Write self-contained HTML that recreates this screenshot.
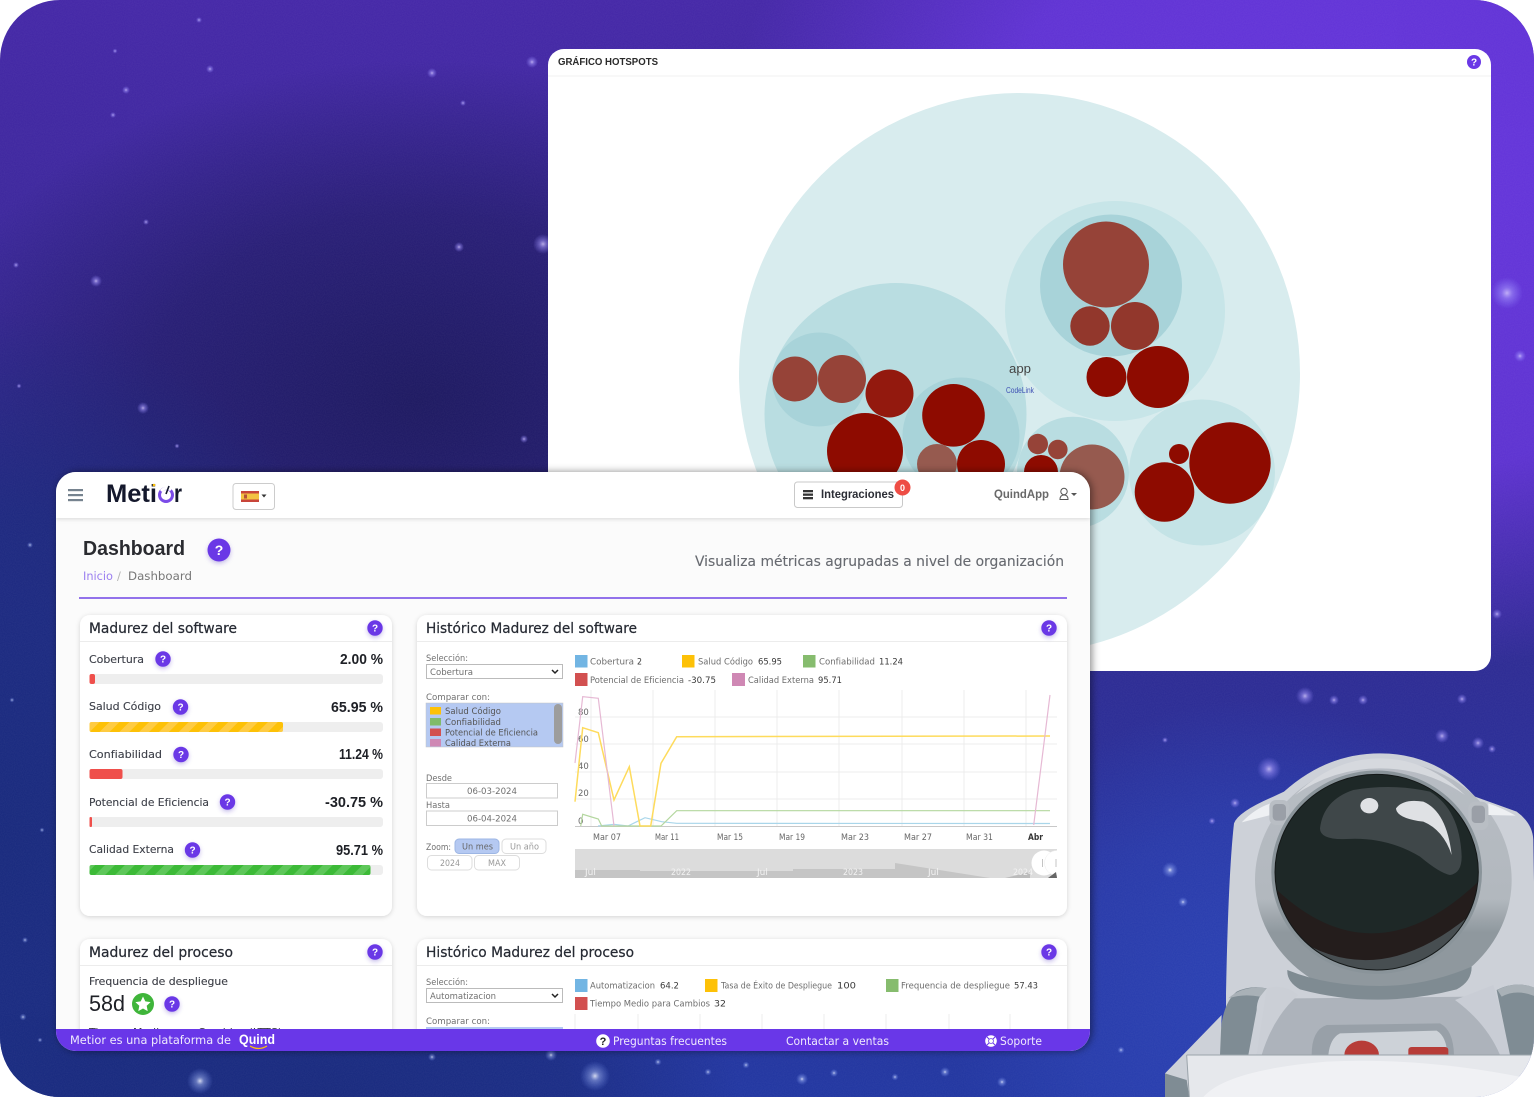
<!DOCTYPE html>
<html lang="es"><head><meta charset="utf-8"><title>Metior Dashboard</title>
<style>
html,body{margin:0;padding:0;background:#fff;width:1536px;height:1097px;overflow:hidden}
svg{display:block}
text{font-family:"DejaVu Sans","Liberation Sans",sans-serif;white-space:pre}
.t{font-size:14px;fill:#262a33;stroke:#262a33;stroke-width:.22}
.l{font-size:10.5px;fill:#3c3f48;stroke:#3c3f48;stroke-width:.12}
.v{font-family:"Liberation Sans",sans-serif;font-size:14.5px;fill:#1e2026;font-weight:700}
.b{font-family:"Liberation Sans",sans-serif;font-weight:700}
.s{font-size:8.5px;fill:#707070}
.g{font-size:8.5px;fill:#6d6d6d}
.n{font-size:8.5px;fill:#3a3a3a}
.x{font-size:8.5px;fill:#666}
.q{font-family:"Liberation Sans",sans-serif;font-size:10px;fill:#fff;font-weight:700;text-anchor:middle}
.f{font-size:11.5px;fill:#efeafd}
.w{font-size:9px;fill:#f2f2f2}
</style></head><body>
<svg xmlns="http://www.w3.org/2000/svg" width="1536" height="1097" viewBox="0 0 1536 1097">
<defs>
<linearGradient id="base" x1="0" y1="0" x2="0" y2="1"><stop offset="0" stop-color="#4629a8"/><stop offset=".45" stop-color="#33288f"/><stop offset="1" stop-color="#2338a2"/></linearGradient>
<radialGradient id="rd" gradientUnits="userSpaceOnUse" cx="0" cy="0" r="1" gradientTransform="translate(420 400) scale(500 340)"><stop offset="0" stop-color="#1e1a60" stop-opacity=".95"/><stop offset=".55" stop-color="#1e1a60" stop-opacity=".6"/><stop offset="1" stop-color="#1e1a60" stop-opacity="0"/></radialGradient>
<radialGradient id="rp" gradientUnits="userSpaceOnUse" cx="0" cy="0" r="1" gradientTransform="translate(1400 170) scale(680 500)"><stop offset="0" stop-color="#6636dc"/><stop offset=".6" stop-color="#6636dc" stop-opacity=".85"/><stop offset="1" stop-color="#6636dc" stop-opacity="0"/></radialGradient>
<radialGradient id="rn" gradientUnits="userSpaceOnUse" cx="0" cy="0" r="1" gradientTransform="translate(0 830) scale(400 520)"><stop offset="0" stop-color="#1a2b7e"/><stop offset=".6" stop-color="#1a2b7e" stop-opacity=".75"/><stop offset="1" stop-color="#1a2b7e" stop-opacity="0"/></radialGradient>
<radialGradient id="rn2" gradientUnits="userSpaceOnUse" cx="0" cy="0" r="1" gradientTransform="translate(320 1097) scale(420 190)"><stop offset="0" stop-color="#1a2b7e"/><stop offset=".6" stop-color="#1a2b7e" stop-opacity=".75"/><stop offset="1" stop-color="#1a2b7e" stop-opacity="0"/></radialGradient>
<radialGradient id="rb" gradientUnits="userSpaceOnUse" cx="0" cy="0" r="1" gradientTransform="translate(1250 1000) scale(300 300)"><stop offset="0" stop-color="#2c42b4"/><stop offset=".6" stop-color="#2c42b4" stop-opacity=".6"/><stop offset="1" stop-color="#2c42b4" stop-opacity="0"/></radialGradient>
<radialGradient id="st"><stop offset="0" stop-color="#d8ccff" stop-opacity=".8"/><stop offset=".35" stop-color="#a99bff" stop-opacity=".5"/><stop offset="1" stop-color="#8f85ff" stop-opacity="0"/></radialGradient>
<radialGradient id="sb"><stop offset="0" stop-color="#f4f6ff" stop-opacity=".85"/><stop offset=".3" stop-color="#b6c8ff" stop-opacity=".45"/><stop offset="1" stop-color="#7f9cff" stop-opacity="0"/></radialGradient>
<linearGradient id="hel" x1="0" y1="0" x2="0" y2="1"><stop offset="0" stop-color="#b8bdc4"/><stop offset=".58" stop-color="#b2b8be"/><stop offset=".72" stop-color="#8f989e"/><stop offset="1" stop-color="#8f989e"/></linearGradient>
<filter id="noise" x="0" y="0" width="100%" height="100%"><feTurbulence type="fractalNoise" baseFrequency=".9" numOctaves="2" seed="3"/><feColorMatrix values="0 0 0 0 1  0 0 0 0 1  0 0 0 0 1  0 0 0 .5 -.12"/></filter>
<filter id="main" x="-5%" y="-5%" width="110%" height="110%"><feDropShadow dx="2" dy="0" stdDeviation="4" flood-color="#000" flood-opacity=".45"/></filter>
<filter id="card" x="-5%" y="-5%" width="110%" height="110%"><feDropShadow dx="0" dy="1" stdDeviation="2.5" flood-color="#000" flood-opacity=".16"/></filter>
<filter id="hs" x="-50%" y="-50%" width="200%" height="200%"><feDropShadow dx="0" dy="2" stdDeviation="2" flood-color="#4b2bbd" flood-opacity=".3"/></filter>
<filter id="hdr" x="-5%" y="-20%" width="110%" height="150%"><feDropShadow dx="0" dy="1" stdDeviation="2" flood-color="#000" flood-opacity=".14"/></filter>
<pattern id="py" width="14" height="14" patternUnits="userSpaceOnUse" patternTransform="rotate(45)"><rect width="14" height="14" fill="#fdc107"/><rect width="7" height="14" fill="#fecb42"/></pattern>
<pattern id="pg" width="14" height="14" patternUnits="userSpaceOnUse" patternTransform="rotate(45)"><rect width="14" height="14" fill="#3cba37"/><rect width="7" height="14" fill="#5ec75a"/></pattern>
<clipPath id="cb"><rect x="0" y="0" width="1534" height="1097" rx="60"/></clipPath>
<clipPath id="cm"><rect x="56" y="472" width="1034" height="579" rx="20"/></clipPath>
<clipPath id="cnav"><rect x="575" y="849" width="482" height="29"/></clipPath>
<clipPath id="clist"><rect x="426" y="703" width="137" height="44"/></clipPath>
<clipPath id="cvis"><ellipse cx="650" cy="396.5" rx="305" ry="293.5"/></clipPath>
<clipPath id="cast"><path d="M0 0H1128V945H0Z"/></clipPath>
</defs>

<!-- background -->
<g clip-path="url(#cb)">
<rect width="1534" height="1097" fill="url(#base)"/>
<rect width="1534" height="1097" fill="url(#rd)"/>
<rect width="1534" height="1097" fill="url(#rp)"/>
<rect width="1534" height="1097" fill="url(#rn)"/>
<rect width="1534" height="1097" fill="url(#rn2)"/>
<rect width="1534" height="1097" fill="url(#rb)"/>
<rect width="1534" height="1097" filter="url(#noise)" opacity=".12"/>
<g fill="url(#st)">
<circle cx="199" cy="20" r="3"/><circle cx="210" cy="69" r="4"/><circle cx="126" cy="90" r="4"/><circle cx="113" cy="115" r="3"/><circle cx="115" cy="51" r="2.500"/><circle cx="432" cy="73" r="5"/><circle cx="463" cy="103" r="3"/><circle cx="532" cy="62" r="6"/><circle cx="96" cy="281" r="6"/><circle cx="146" cy="222" r="3"/><circle cx="16" cy="265" r="3"/><circle cx="143" cy="408" r="6"/><circle cx="459" cy="247" r="5"/><circle cx="543" cy="244" r="10"/><circle cx="524" cy="439" r="4"/><circle cx="177" cy="446" r="2.500"/><circle cx="19" cy="386" r="2.500"/>
<circle cx="1507" cy="293" r="16"/><circle cx="1520" cy="356" r="6"/><circle cx="1497" cy="614" r="5"/><circle cx="1305" cy="696" r="9"/><circle cx="1334" cy="700" r="5"/><circle cx="1363" cy="700" r="5"/><circle cx="1462" cy="699" r="5"/><circle cx="1442" cy="736" r="7"/><circle cx="1478" cy="743" r="6"/><circle cx="1492" cy="749" r="4"/><circle cx="1165" cy="740" r="3"/><circle cx="1269" cy="769" r="12"/><circle cx="1235" cy="803" r="5"/><circle cx="1212" cy="821" r="3.500"/>
</g>
<g fill="url(#sb)">
<circle cx="200" cy="1081" r="13"/><circle cx="595" cy="1076" r="15"/><circle cx="551" cy="1055" r="6"/><circle cx="658" cy="1062" r="3.500"/><circle cx="746" cy="1065" r="3.500"/><circle cx="834" cy="1073" r="4"/><circle cx="802" cy="1079" r="6"/><circle cx="945" cy="1072" r="5"/><circle cx="1002" cy="1082" r="5"/><circle cx="895" cy="1077" r="3.500"/><circle cx="708" cy="1072" r="3.500"/><circle cx="432" cy="1057" r="4"/><circle cx="23" cy="1017" r="3.500"/><circle cx="1121" cy="1050" r="3.500"/><circle cx="1170" cy="870" r="8"/><circle cx="1183" cy="902" r="5"/>
<circle cx="30" cy="545" r="3"/><circle cx="12" cy="700" r="2.500"/><circle cx="42" cy="830" r="2.500"/><circle cx="25" cy="940" r="3"/><circle cx="40" cy="1040" r="2.500"/>
</g>
</g>

<!-- hotspots panel -->
<rect x="548" y="49" width="943" height="622" rx="16" fill="#fff"/>
<line x1="548" x2="1491" y1="76" y2="76" stroke="#f1f1f1"/>
<text class="b" x="558" y="65" textLength="100" lengthAdjust="spacingAndGlyphs" style="font-size:10.500px;fill:#2a2a2a">GRÁFICO HOTSPOTS</text>
<circle cx="1474" cy="62" r="7" fill="#6a38e6"/><text x="1474" y="65.500" class="q">?</text>
<circle cx="1019.500" cy="373.500" r="280.500" fill="#d8ecee"/>
<circle cx="1115" cy="311" r="110" fill="#c7e5e8"/>
<circle cx="1111" cy="285.500" r="71" fill="#a8d3d9"/>
<circle cx="1106" cy="264.500" r="43" fill="#964338"/>
<circle cx="1090" cy="326" r="19.700" fill="#92372c"/>
<circle cx="1135" cy="326" r="24" fill="#92372c"/>
<circle cx="1106.500" cy="377" r="20" fill="#8e0b00"/>
<circle cx="1158" cy="377" r="31" fill="#8e0b00"/>
<circle cx="895.500" cy="414" r="131" fill="#b9dde1"/>
<circle cx="819" cy="379.500" r="47" fill="#a8d3d9"/>
<circle cx="795" cy="379" r="22.500" fill="#964338"/>
<circle cx="842" cy="379" r="24" fill="#964338"/>
<circle cx="889.500" cy="393.500" r="24" fill="#93190e"/>
<circle cx="961" cy="436" r="58.500" fill="#a8d3d9"/>
<circle cx="865" cy="451" r="38" fill="#8e0b00"/>
<circle cx="953.500" cy="415.300" r="31.300" fill="#8e0b00"/>
<circle cx="937" cy="464" r="20" fill="#965a4f"/>
<circle cx="981" cy="464" r="24" fill="#8e0b00"/>
<circle cx="1073" cy="472.700" r="56" fill="#b9dde1"/>
<circle cx="1037.800" cy="444" r="10.200" fill="#964338"/>
<circle cx="1057.800" cy="449.500" r="9.800" fill="#964338"/>
<circle cx="1041" cy="472" r="17" fill="#8e0b00"/>
<circle cx="1092" cy="477" r="32.500" fill="#965a4f"/>
<circle cx="1202" cy="472.500" r="73" fill="#c4e3e6"/>
<circle cx="1230" cy="463" r="40.700" fill="#8e0b00"/>
<circle cx="1164.500" cy="492" r="29.800" fill="#8e0b00"/>
<circle cx="1179" cy="454" r="10" fill="#8e0b00"/>
<text x="1009" y="373" textLength="22" lengthAdjust="spacingAndGlyphs" style="font-family:'Liberation Sans',sans-serif;font-size:13px;fill:#444">app</text>
<text x="1006" y="393" textLength="28" lengthAdjust="spacingAndGlyphs" style="font-family:'Liberation Sans',sans-serif;font-size:8px;fill:#3f51b5">CodeLink</text>

<!-- main panel -->
<rect x="56" y="472" width="1034" height="579" rx="20" fill="#fbfbfb" filter="url(#main)"/>
<g clip-path="url(#cm)">
<rect x="56" y="472" width="1034" height="46" fill="#fff" filter="url(#hdr)"/>
<!-- header -->
<g fill="#76838f"><rect x="68" y="489" width="15" height="2.200"/><rect x="68" y="494" width="15" height="2.200"/><rect x="68" y="499" width="15" height="2.200"/></g>
<text class="b" x="106" y="502" textLength="51" lengthAdjust="spacingAndGlyphs" style="font-size:25px;fill:#14182c">Meti</text>
<circle cx="166" cy="495" r="6.500" fill="none" stroke="#7b4be8" stroke-width="3"/>
<path d="M161 491Q166 486 171 490" fill="none" stroke="#fff" stroke-width="3"/>
<path d="M166 494L169 486" stroke="#14182c" stroke-width="1.600"/><circle cx="154" cy="485" r="1.300" fill="#fdc107"/>
<text class="b" x="174" y="502" textLength="8" lengthAdjust="spacingAndGlyphs" style="font-size:25px;fill:#14182c">r</text>
<rect x="233" y="483.500" width="41.500" height="26" rx="3" fill="#fff" stroke="#ccc"/>
<rect x="241" y="491" width="18" height="11" fill="#c8453a"/><rect x="241" y="493.500" width="18" height="6" fill="#f3c343"/><rect x="244" y="494.500" width="3" height="4" fill="#b5533a"/>
<path d="M261.500 494.500h5l-2.500 3z" fill="#333"/>

<rect x="794.500" y="482" width="108" height="25.500" rx="3" fill="#fff" stroke="#c9c9c9"/>
<g fill="#333"><rect x="803" y="490" width="10" height="2.300"/><rect x="803" y="493.500" width="10" height="2.300"/><rect x="803" y="497" width="10" height="2.300"/></g>
<text class="b" x="821" y="498" textLength="73" lengthAdjust="spacingAndGlyphs" style="font-size:11.500px;fill:#2b2d35">Integraciones</text>
<circle cx="902.500" cy="487.500" r="8" fill="#ee4d45"/><text x="902.500" y="491" class="q" style="font-size:9px">0</text>
<text class="b" x="994" y="498" textLength="55" lengthAdjust="spacingAndGlyphs" style="font-size:12px;fill:#696969">QuindApp</text>
<circle cx="1064" cy="491.500" r="3.200" fill="none" stroke="#555"/><path d="M1060 499.500q0-4.500 4-4.500t4 4.500z" fill="none" stroke="#555"/>
<path d="M1071 493h6l-3 3z" fill="#555"/>

<!-- title -->
<text class="b" x="83" y="555" textLength="102" lengthAdjust="spacingAndGlyphs" style="font-size:20px;fill:#2a2b30">Dashboard</text>
<g filter="url(#hs)"><circle cx="219" cy="550" r="11.500" fill="#6a38e6"/></g><text x="219" y="555" class="q" style="font-size:14px">?</text>
<text x="83" y="580" textLength="30" lengthAdjust="spacingAndGlyphs" style="font-size:11.500px;fill:#9b7ff0">Inicio</text>
<text x="117" y="580" style="font-size:11.500px;fill:#b5b5b5">/</text>
<text x="128" y="580" textLength="64" lengthAdjust="spacingAndGlyphs" style="font-size:11.500px;fill:#777">Dashboard</text>
<text x="695" y="566" textLength="369" lengthAdjust="spacingAndGlyphs" style="font-size:14px;fill:#676a70;stroke:#676a70;stroke-width:.12">Visualiza métricas agrupadas a nivel de organización</text>
<line x1="79" x2="1067" y1="598" y2="598" stroke="#6f45e6" stroke-width="1.500"/>

<!-- cards -->
<rect x="80" y="615" width="312" height="301" rx="10" fill="#fff" filter="url(#card)"/>
<rect x="417" y="615" width="650" height="301" rx="10" fill="#fff" filter="url(#card)"/>
<rect x="80" y="939" width="312" height="112" rx="10" fill="#fff" filter="url(#card)"/>
<rect x="417" y="939" width="650" height="112" rx="10" fill="#fff" filter="url(#card)"/>
<g stroke="#ececec"><line x1="80" x2="392" y1="641.500" y2="641.500"/><line x1="417" x2="1067" y1="641.500" y2="641.500"/><line x1="80" x2="392" y1="965.500" y2="965.500"/><line x1="417" x2="1067" y1="965.500" y2="965.500"/></g>
<text class="t" x="89" y="633" textLength="148" lengthAdjust="spacingAndGlyphs">Madurez del software</text>
<text class="t" x="426" y="633" textLength="211" lengthAdjust="spacingAndGlyphs">Histórico Madurez del software</text>
<text class="t" x="89" y="957" textLength="144" lengthAdjust="spacingAndGlyphs">Madurez del proceso</text>
<text class="t" x="426" y="957" textLength="208" lengthAdjust="spacingAndGlyphs">Histórico Madurez del proceso</text>
<g filter="url(#hs)" fill="#6a38e6"><circle cx="375" cy="628" r="7.700"/><circle cx="1049" cy="628" r="7.700"/><circle cx="375" cy="952" r="7.700"/><circle cx="1049" cy="952" r="7.700"/><circle cx="163" cy="659" r="7.700"/><circle cx="180.500" cy="707" r="7.700"/><circle cx="181" cy="754.500" r="7.700"/><circle cx="227.500" cy="802" r="7.700"/><circle cx="192.500" cy="850" r="7.700"/><circle cx="172" cy="1004" r="7.700"/></g>
<g><text class="q" x="375" y="631.500">?</text><text class="q" x="1049" y="631.500">?</text><text class="q" x="375" y="955.500">?</text><text class="q" x="1049" y="955.500">?</text><text class="q" x="163" y="662.500">?</text><text class="q" x="180.500" y="710.500">?</text><text class="q" x="181" y="758">?</text><text class="q" x="227.500" y="805.500">?</text><text class="q" x="192.500" y="853.500">?</text><text class="q" x="172" y="1007.500">?</text></g>

<!-- metrics -->
<text class="l" x="89" y="663" textLength="55" lengthAdjust="spacingAndGlyphs">Cobertura</text>
<text class="v" x="340" y="664" textLength="43" lengthAdjust="spacingAndGlyphs">2.00 %</text>
<rect x="89.500" y="674" width="293.500" height="10" rx="3" fill="#eee"/><rect x="89.500" y="674" width="5.500" height="10" rx="2" fill="#ef4f4b"/>
<text class="l" x="89" y="710" textLength="72" lengthAdjust="spacingAndGlyphs">Salud Código</text>
<text class="v" x="331" y="712" textLength="52" lengthAdjust="spacingAndGlyphs">65.95 %</text>
<rect x="89.500" y="722" width="293.500" height="10" rx="3" fill="#eee"/><rect x="89.500" y="722" width="193.500" height="10" rx="2" fill="url(#py)"/>
<text class="l" x="89" y="758" textLength="73" lengthAdjust="spacingAndGlyphs">Confiabilidad</text>
<text class="v" x="339" y="759" textLength="44" lengthAdjust="spacingAndGlyphs">11.24 %</text>
<rect x="89.500" y="769" width="293.500" height="10" rx="3" fill="#eee"/><rect x="89.500" y="769" width="33" height="10" rx="2" fill="#ef4f4b"/>
<text class="l" x="89" y="806" textLength="120" lengthAdjust="spacingAndGlyphs">Potencial de Eficiencia</text>
<text class="v" x="325" y="807" textLength="58" lengthAdjust="spacingAndGlyphs">-30.75 %</text>
<rect x="89.500" y="817" width="293.500" height="10" rx="3" fill="#eee"/><rect x="89.500" y="817" width="2.500" height="10" rx="1" fill="#ef4f4b"/>
<text class="l" x="89" y="853" textLength="85" lengthAdjust="spacingAndGlyphs">Calidad Externa</text>
<text class="v" x="336" y="855" textLength="47" lengthAdjust="spacingAndGlyphs">95.71 %</text>
<rect x="89.500" y="865" width="293.500" height="10" rx="3" fill="#eee"/><rect x="89.500" y="865" width="281" height="10" rx="2" fill="url(#pg)"/>

<!-- chart controls -->
<text class="s" x="426" y="661" textLength="42" lengthAdjust="spacingAndGlyphs">Selección:</text>
<rect x="426.500" y="664.500" width="136" height="14" fill="#fff" stroke="#bbb"/>
<text class="s" x="430" y="675" textLength="43" lengthAdjust="spacingAndGlyphs">Cobertura</text>
<path d="M552 670l3 3 3-3" fill="none" stroke="#222" stroke-width="1.500"/>
<text class="s" x="426" y="700" textLength="64" lengthAdjust="spacingAndGlyphs">Comparar con:</text>
<rect x="426" y="703" width="137" height="44" fill="#b5c9f2" stroke="#c4c4c4" stroke-width=".5"/>
<g clip-path="url(#clist)">
<rect x="430" y="707" width="11" height="7.500" fill="#fdc107"/><rect x="430" y="718" width="11" height="7.500" fill="#80bb6a"/><rect x="430" y="728.500" width="11" height="7.500" fill="#d25050"/><rect x="430" y="739" width="11" height="7.500" fill="#cf88b4"/>
<text class="g" x="445" y="714" textLength="56" lengthAdjust="spacingAndGlyphs" style="fill:#555">Salud Código</text>
<text class="g" x="445" y="725" textLength="56" lengthAdjust="spacingAndGlyphs" style="fill:#555">Confiabilidad</text>
<text class="g" x="445" y="735.500" textLength="93" lengthAdjust="spacingAndGlyphs" style="fill:#555">Potencial de Eficiencia</text>
<text class="g" x="445" y="746" textLength="66" lengthAdjust="spacingAndGlyphs" style="fill:#555">Calidad Externa</text>
</g>
<rect x="554" y="704" width="8" height="40" rx="4" fill="#9d9d9d"/>
<text class="s" x="426" y="781" textLength="26" lengthAdjust="spacingAndGlyphs">Desde</text>
<rect x="426.500" y="783.500" width="131" height="14.500" fill="#fff" stroke="#ccc"/>
<text class="s" x="467" y="794" textLength="50" lengthAdjust="spacingAndGlyphs">06-03-2024</text>
<text class="s" x="426" y="808" textLength="24" lengthAdjust="spacingAndGlyphs">Hasta</text>
<rect x="426.500" y="811" width="131" height="14.500" fill="#fff" stroke="#ccc"/>
<text class="s" x="467" y="821.500" textLength="50" lengthAdjust="spacingAndGlyphs">06-04-2024</text>
<text class="s" x="426" y="850" textLength="25" lengthAdjust="spacingAndGlyphs">Zoom:</text>
<rect x="455" y="839" width="44" height="14.500" rx="4" fill="#b5c9f2" stroke="#9db6e4"/><rect x="502" y="839" width="44" height="14.500" rx="4" fill="#fff" stroke="#ddd"/><rect x="427.500" y="855.500" width="44.500" height="14.500" rx="4" fill="#fff" stroke="#ddd"/><rect x="474.500" y="855.500" width="45" height="14.500" rx="4" fill="#fff" stroke="#ddd"/>
<text class="s" x="462" y="849.500" textLength="31" lengthAdjust="spacingAndGlyphs" style="fill:#666">Un mes</text>
<text class="s" x="510" y="849.500" textLength="29" lengthAdjust="spacingAndGlyphs" style="fill:#999">Un año</text>
<text class="s" x="440" y="866" textLength="20" lengthAdjust="spacingAndGlyphs" style="fill:#999">2024</text>
<text class="s" x="488" y="866" textLength="18" lengthAdjust="spacingAndGlyphs" style="fill:#999">MAX</text>

<!-- legend -->
<rect x="575" y="655" width="12.500" height="12.500" fill="#72b5e3"/><rect x="682" y="655" width="12.500" height="12.500" fill="#fdc107"/><rect x="803" y="655" width="12.500" height="12.500" fill="#86bc6e"/><rect x="575" y="673" width="12.500" height="13" fill="#d25050"/><rect x="732" y="673" width="13" height="13" fill="#cf88b4"/>
<text class="g" x="590" y="664.500" textLength="44" lengthAdjust="spacingAndGlyphs">Cobertura</text><text class="n" x="637" y="664.500" textLength="5" lengthAdjust="spacingAndGlyphs">2</text>
<text class="g" x="698" y="664.500" textLength="55" lengthAdjust="spacingAndGlyphs">Salud Código</text><text class="n" x="758" y="664.500" textLength="24" lengthAdjust="spacingAndGlyphs">65.95</text>
<text class="g" x="819" y="664.500" textLength="56" lengthAdjust="spacingAndGlyphs">Confiabilidad</text><text class="n" x="879" y="664.500" textLength="24" lengthAdjust="spacingAndGlyphs">11.24</text>
<text class="g" x="590" y="683" textLength="94" lengthAdjust="spacingAndGlyphs">Potencial de Eficiencia</text><text class="n" x="688" y="683" textLength="28" lengthAdjust="spacingAndGlyphs">-30.75</text>
<text class="g" x="748" y="683" textLength="66" lengthAdjust="spacingAndGlyphs">Calidad Externa</text><text class="n" x="818" y="683" textLength="24" lengthAdjust="spacingAndGlyphs">95.71</text>

<!-- chart -->
<g stroke="#ececec" stroke-width="1"><line x1="575" x2="1057" y1="717" y2="717"/><line x1="575" x2="1057" y1="744" y2="744"/><line x1="575" x2="1057" y1="772" y2="772"/><line x1="575" x2="1057" y1="799" y2="799"/>
<line x1="591" x2="591" y1="690" y2="826"/><line x1="653" x2="653" y1="690" y2="826"/><line x1="715" x2="715" y1="690" y2="826"/><line x1="777" x2="777" y1="690" y2="826"/><line x1="839" x2="839" y1="690" y2="826"/><line x1="902" x2="902" y1="690" y2="826"/><line x1="964" x2="964" y1="690" y2="826"/><line x1="1026" x2="1026" y1="690" y2="826"/></g>
<line x1="575" x2="1057" y1="826.500" y2="826.500" stroke="#c8c8c8"/>
<text x="578" y="715" class="x">80</text><text x="578" y="742" class="x">60</text><text x="578" y="769" class="x">40</text><text x="578" y="796" class="x">20</text><text x="578" y="824" class="x">0</text>
<polyline fill="none" stroke="#a9d6ea" stroke-width="1.200" points="598,826 614,824.300 628,826 645,817.700 661.700,821.700 676.700,823.300 1050,823.500"/>
<polyline fill="none" stroke="#b4d79f" stroke-width="1.200" points="580.700,826 582.700,814.300 598.300,819 601.700,826 661,826 676.700,810.700 1050,810.700"/>
<polyline fill="none" stroke="#fedb5c" stroke-width="1.500" points="575,801.700 582.700,727.700 598.300,732.700 614,800 629.300,766.700 640,826 650.700,826 661,763.300 676.700,736.700 1050,736"/>
<polyline fill="none" stroke="#e6b9d4" stroke-width="1.200" points="575,763 582.700,696.700 598.300,698.300 614,826"/>
<polyline fill="none" stroke="#e6b9d4" stroke-width="1.200" points="1033.700,825 1050,695"/>
<text class="x" x="593" y="840" textLength="28" lengthAdjust="spacingAndGlyphs">Mar 07</text><text class="x" x="655" y="840" textLength="24" lengthAdjust="spacingAndGlyphs">Mar 11</text><text class="x" x="717" y="840" textLength="26" lengthAdjust="spacingAndGlyphs">Mar 15</text><text class="x" x="779" y="840" textLength="26" lengthAdjust="spacingAndGlyphs">Mar 19</text><text class="x" x="841" y="840" textLength="28" lengthAdjust="spacingAndGlyphs">Mar 23</text><text class="x" x="904" y="840" textLength="28" lengthAdjust="spacingAndGlyphs">Mar 27</text><text class="x" x="966" y="840" textLength="27" lengthAdjust="spacingAndGlyphs">Mar 31</text><text class="x" x="1028" y="840" textLength="15" lengthAdjust="spacingAndGlyphs" style="font-weight:700;fill:#333">Abr</text>
<!-- navigator -->
<g clip-path="url(#cnav)">
<rect x="575" y="849" width="482" height="29" fill="#dcdcdc"/>
<path d="M575 870H640V871H720L793 871V869H895V863L990 878H575Z" fill="#c5c5c5"/>
<path d="M1005 878L1030 872V878Z" fill="#bbb"/>
<text class="w" x="585" y="875">Jul</text><text class="w" x="671" y="875" textLength="20" lengthAdjust="spacingAndGlyphs">2022</text><text class="w" x="757" y="875">Jul</text><text class="w" x="843" y="875" textLength="20" lengthAdjust="spacingAndGlyphs">2023</text><text class="w" x="928" y="875">Jul</text><text class="w" x="1013" y="875" textLength="20" lengthAdjust="spacingAndGlyphs">2024</text>
<circle cx="1044" cy="863" r="12.500" fill="#fff"/><path d="M1042.500 859v8M1045.500 859v8" stroke="#c4c4c4"/>
<circle cx="1057" cy="863" r="12.500" fill="#fff" stroke="#eee" stroke-width=".5"/><path d="M1056 859v8" stroke="#c4c4c4"/>
<path d="M1048 878l8-6 1 6z" fill="#666"/>
</g>

<!-- process card -->
<text x="89" y="985" textLength="139" lengthAdjust="spacingAndGlyphs" style="font-size:10.500px;fill:#3a3c44;stroke:#3a3c44;stroke-width:.12">Frequencia de despliegue</text>
<text x="89" y="1011" textLength="36" lengthAdjust="spacingAndGlyphs" style="font-family:'Liberation Sans',sans-serif;font-size:22px;fill:#1e2026">58d</text>
<circle cx="143" cy="1004" r="11" fill="#3fb53a"/>
<path d="M143 996.500l2.300 4.900 5.300.7-3.900 3.700 1 5.300-4.700-2.600-4.700 2.600 1-5.300-3.900-3.700 5.300-.7z" fill="#fff"/>
<text x="89" y="1036" textLength="193" lengthAdjust="spacingAndGlyphs" style="font-size:10.500px;fill:#3a3c44">Tiempo Medio para Cambios (LTTC)</text>

<text class="s" x="426" y="985" textLength="42" lengthAdjust="spacingAndGlyphs">Selección:</text>
<rect x="426.500" y="988.500" width="136" height="14" fill="#fff" stroke="#bbb"/>
<text class="s" x="430" y="999" textLength="66" lengthAdjust="spacingAndGlyphs">Automatizacion</text>
<path d="M552 994l3 3 3-3" fill="none" stroke="#222" stroke-width="1.500"/>
<text class="s" x="426" y="1024" textLength="64" lengthAdjust="spacingAndGlyphs">Comparar con:</text>
<rect x="426" y="1027" width="137" height="10" fill="#b5c9f2"/>
<rect x="575" y="979" width="12.500" height="13" fill="#72b5e3"/><rect x="705" y="979" width="12.500" height="13" fill="#fdc107"/><rect x="886" y="979" width="12.500" height="13" fill="#86bc6e"/><rect x="575" y="997" width="12.500" height="13" fill="#d25050"/>
<text class="g" x="590" y="988.500" textLength="65" lengthAdjust="spacingAndGlyphs">Automatizacion</text><text class="n" x="660" y="988.500" textLength="19" lengthAdjust="spacingAndGlyphs">64.2</text>
<text class="g" x="721" y="988.500" textLength="111" lengthAdjust="spacingAndGlyphs">Tasa de Éxito de Despliegue</text><text class="n" x="837" y="988.500" textLength="19" lengthAdjust="spacingAndGlyphs">100</text>
<text class="g" x="901" y="988.500" textLength="109" lengthAdjust="spacingAndGlyphs">Frequencia de despliegue</text><text class="n" x="1014" y="988.500" textLength="24" lengthAdjust="spacingAndGlyphs">57.43</text>
<text class="g" x="590" y="1006.500" textLength="120" lengthAdjust="spacingAndGlyphs">Tiempo Medio para Cambios</text><text class="n" x="714" y="1006.500" textLength="12" lengthAdjust="spacingAndGlyphs">32</text>
<g stroke="#ececec"><line x1="575" x2="575" y1="1014" y2="1029"/><line x1="638" x2="638" y1="1014" y2="1029"/><line x1="700" x2="700" y1="1014" y2="1029"/><line x1="762" x2="762" y1="1014" y2="1029"/><line x1="824" x2="824" y1="1014" y2="1029"/><line x1="886" x2="886" y1="1014" y2="1029"/><line x1="949" x2="949" y1="1014" y2="1029"/><line x1="1010" x2="1010" y1="1014" y2="1029"/></g>

<!-- footer -->
<rect x="56" y="1029" width="1034" height="22" fill="#6937e8"/>
<text class="f" x="70" y="1044" textLength="161" lengthAdjust="spacingAndGlyphs">Metior es una plataforma de</text>
<text class="b" x="239" y="1044" textLength="36" lengthAdjust="spacingAndGlyphs" style="font-size:13.500px;fill:#fff">Quind</text>
<path d="M250 1046q8.500 5 17 0" fill="none" stroke="#fdc107" stroke-width="1.300"/>
<circle cx="603" cy="1041" r="6.800" fill="#fff"/><text x="603" y="1045" class="b" style="font-size:11px;fill:#222;text-anchor:middle">?</text>
<text class="f" x="613" y="1045" textLength="114" lengthAdjust="spacingAndGlyphs">Preguntas frecuentes</text>
<text class="f" x="786" y="1045" textLength="103" lengthAdjust="spacingAndGlyphs">Contactar a ventas</text>
<circle cx="991" cy="1041" r="5.800" fill="#fff"/><path d="M987 1037l8 8M995 1037l-8 8" stroke="#6937e8" stroke-width="1"/><circle cx="991" cy="1041" r="2.400" fill="#fff" stroke="#6937e8" stroke-width=".8"/>
<text class="f" x="1000" y="1045" textLength="42" lengthAdjust="spacingAndGlyphs">Soporte</text>
</g>

<!-- astronaut -->
<g clip-path="url(#cb)"><g transform="translate(1160 740) scale(.33333)">
<g clip-path="url(#cast)">
<path d="M198 945L198 760Q205 400 222 250Q235 215 340 170L372 155Q500 40 660 40Q830 40 945 170L1070 215Q1118 250 1120 300L1128 800V945Z" fill="#cdd1d8"/>
<ellipse cx="670" cy="420" rx="385" ry="358" fill="url(#hel)"/>
<path d="M405 165Q520 55 660 55Q800 55 915 165Q800 85 660 85Q520 85 405 165Z" fill="#d6d9de"/>
<path d="M290 945Q310 850 400 775L950 770Q1030 850 1050 945Z" fill="#adb3bb"/>
<path d="M290 945L320 745Q370 730 415 765Q340 830 305 945Z" fill="#cbcfd6"/>
<path d="M885 780L1000 735Q1020 800 1050 945H1020Q980 850 885 780Z" fill="#c9cdd5"/>
<path d="M180 945Q175 800 230 755Q270 735 320 745Q290 770 290 810L265 945Z" fill="#7f8c94"/>
<path d="M205 775Q250 735 320 745L300 770Q250 760 205 775Z" fill="#a9b1b7"/>
<path d="M1050 945L1010 750Q1070 720 1128 745V945Z" fill="#7f8c94"/>
<path d="M1012 750Q1070 720 1128 745V770Q1070 745 1025 770Z" fill="#a9b1b7"/>
<path d="M382 690Q380 725 420 748Q650 810 890 748Q935 725 935 680Q800 738 660 738Q500 738 382 690Z" fill="#7f8b92"/>
<path d="M455 945Q455 870 500 855L840 850Q880 870 882 945Z" fill="#98a0a8"/>
<path d="M505 945Q510 895 540 880L830 872Q860 890 862 945Z" fill="#cdd2d8"/>
<path d="M553 945A52 43 0 0 1 657 945Z" fill="#b73c38"/>
<path d="M745 945V931Q745 921 755 921H855Q865 921 865 931V945Z" fill="#b73c38"/>
<path d="M245 247Q285 205 332 190L332 225Z" fill="#eef0f3"/>
<path d="M985 190Q1030 205 1067 227L985 225Z" fill="#eef0f3"/>
<rect x="328" y="180" width="60" height="75" rx="20" fill="#b9bec4"/><rect x="338" y="192" width="40" height="50" rx="12" fill="#9a9fa7"/>
<rect x="925" y="185" width="60" height="85" rx="20" fill="#b9bec4"/><rect x="935" y="197" width="40" height="52" rx="12" fill="#9a9fa7"/>
<ellipse cx="650" cy="396.500" rx="316" ry="305" fill="#8a949a"/>
<ellipse cx="650" cy="396.500" rx="305" ry="293.500" fill="#1e2827"/>
<g clip-path="url(#cvis)">
<path d="M340 440Q640 730 960 420V700H340Z" fill="#241d1c"/>
<path d="M400 590Q650 756 925 530V700H400Z" fill="#474e51"/>
<path d="M480 265Q490 180 580 150Q700 130 810 155Q900 210 905 350Q905 400 870 405Q840 400 780 350Q680 290 560 297Q480 300 480 265Z" fill="#3f4749"/>
</g>
<ellipse cx="650" cy="396.500" rx="305" ry="293.500" fill="none" stroke="#141818" stroke-width="3"/>
<ellipse cx="628" cy="197" rx="27" ry="23" fill="#dfe1e4"/>
<path d="M708 205Q730 175 790 185Q860 215 875 345Q850 270 790 245Q710 235 708 205Z" fill="#dfe1e4"/>
</g>
<path d="M15 1000L185 825L180 945H80L88 1071H15Z" fill="#cdd1d8"/>
<path d="M15 1000L80 1020L88 1071H15Z" fill="#7f8c94"/>
<path d="M80 945H1128V1071H88Z" fill="#e6e8ec"/>
<path d="M80 945H1128M80 945L88 1071" fill="none" stroke="#9aa3aa" stroke-width="3"/>
<path d="M130 1071Q200 990 500 965Q800 950 1128 1020V1071Z" fill="#f0f1f4"/>
</g></g>
</svg>
</body></html>
